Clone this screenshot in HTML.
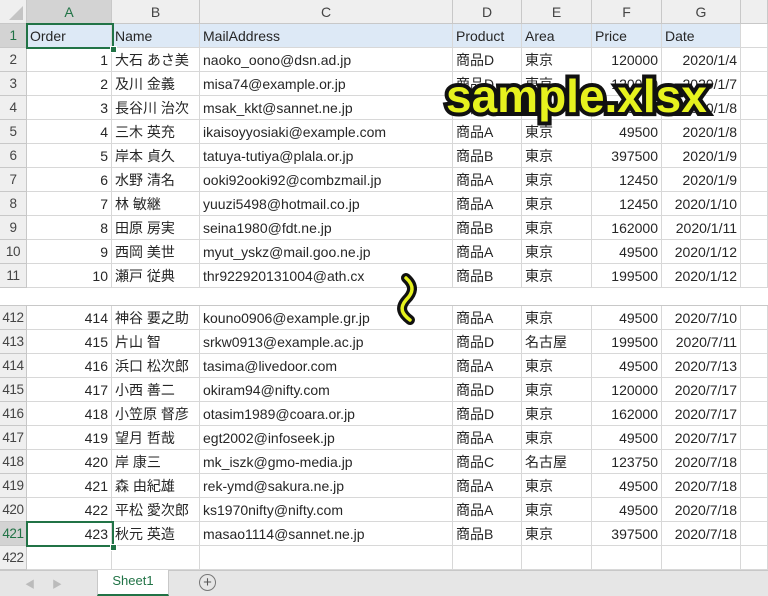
<!DOCTYPE html>
<html><head><meta charset="utf-8"><style>
body{margin:0;width:768px;height:596px;overflow:hidden;background:#fff;font-family:"Liberation Sans","Noto Sans CJK JP",sans-serif;font-size:14px;color:#262626;position:relative}
.c{position:absolute;box-sizing:border-box;height:24px;line-height:24px;padding:0 3px;white-space:nowrap;overflow:hidden;border-right:1px solid #d8d8d8;border-bottom:1px solid #d8d8d8}
.r{text-align:right}
.h{background:#efefef;color:#444;text-align:center;border-color:#c8c8c8}
.rh{background:#efefef;color:#444;text-align:center;padding:0;font-size:13.5px;letter-spacing:-0.4px;border-color:#c8c8c8}
.act{background:#d3d3d3;color:#217346}
.blue{background:#dde9f6}
#label{position:absolute;left:446px;top:69px;font-size:46px;font-weight:bold;color:#e6f21e;-webkit-text-stroke:8px #111;paint-order:stroke fill}
</style></head><body>
<div id="g"></div>
<script>
(function(){
const X=[0,27,112,200,453,522,592,662,741,768];
const topRows=[["1","大石 あさ美","naoko_oono@dsn.ad.jp","商品D","東京","120000","2020/1/4"],
["2","及川 金義","misa74@example.or.jp","商品D","東京","120000","2020/1/7"],
["3","長谷川 治次","msak_kkt@sannet.ne.jp","商品A","東京","49500","2020/1/8"],
["4","三木 英充","ikaisoyyosiaki@example.com","商品A","東京","49500","2020/1/8"],
["5","岸本 貞久","tatuya-tutiya@plala.or.jp","商品B","東京","397500","2020/1/9"],
["6","水野 清名","ooki92ooki92@combzmail.jp","商品A","東京","12450","2020/1/9"],
["7","林 敏継","yuuzi5498@hotmail.co.jp","商品A","東京","12450","2020/1/10"],
["8","田原 房実","seina1980@fdt.ne.jp","商品B","東京","162000","2020/1/11"],
["9","西岡 美世","myut_yskz@mail.goo.ne.jp","商品A","東京","49500","2020/1/12"],
["10","瀬戸 従典","thr922920131004@ath.cx","商品B","東京","199500","2020/1/12"]];
const botRows=[["414","神谷 要之助","kouno0906@example.gr.jp","商品A","東京","49500","2020/7/10"],
["415","片山 智","srkw0913@example.ac.jp","商品D","名古屋","199500","2020/7/11"],
["416","浜口 松次郎","tasima@livedoor.com","商品A","東京","49500","2020/7/13"],
["417","小西 善二","okiram94@nifty.com","商品D","東京","120000","2020/7/17"],
["418","小笠原 督彦","otasim1989@coara.or.jp","商品D","東京","162000","2020/7/17"],
["419","望月 哲哉","egt2002@infoseek.jp","商品A","東京","49500","2020/7/17"],
["420","岸 康三","mk_iszk@gmo-media.jp","商品C","名古屋","123750","2020/7/18"],
["421","森 由紀雄","rek-ymd@sakura.ne.jp","商品A","東京","49500","2020/7/18"],
["422","平松 愛次郎","ks1970nifty@nifty.com","商品A","東京","49500","2020/7/18"],
["423","秋元 英造","masao1114@sannet.ne.jp","商品B","東京","397500","2020/7/18"],
["","","","","","",""]];
let h="";
function cell(i,y,t,cls){h+='<div class="c '+cls+'" style="left:'+X[i]+'px;top:'+y+'px;width:'+(X[i+1]-X[i])+'px">'+t+'</div>';}
const L=["","A","B","C","D","E","F","G",""];
for(let i=0;i<9;i++)cell(i,0,L[i],"h"+(i==1?" act":""));
function row(y,rn,d,hdr,act){cell(0,y,rn,"rh"+(act?" act":""));
 for(let i=0;i<7;i++)cell(i+1,y,d[i],(hdr?"blue":"")+((i==0||i>=5)&&!hdr?" r":""));
 cell(8,y,"","");}
row(24,"1",["Order","Name","MailAddress","Product","Area","Price","Date"],true,true);
topRows.forEach(function(d,k){row(48+24*k,String(k+2),d,false,false);});
botRows.forEach(function(d,k){row(306+24*k,String(412+k),d,false,k==9);});
document.getElementById("g").innerHTML=h;
})();
</script>
<div style="position:absolute;left:0;top:0;width:27px;height:24px;background:#efefef;border-right:1px solid #c8c8c8;border-bottom:1px solid #c8c8c8;box-sizing:border-box"><div style="position:absolute;right:3px;bottom:3px;width:0;height:0;border-left:14px solid transparent;border-bottom:14px solid #c4c4c4"></div></div>
<div style="position:absolute;left:0;top:288px;width:768px;height:18px;background:#fff;border-bottom:1px solid #c8c8c8;box-sizing:border-box"></div>
<div style="position:absolute;left:26px;top:23px;width:88px;height:26px;border:2px solid #217346;box-sizing:border-box"></div>
<div style="position:absolute;left:110px;top:46px;width:5px;height:5px;background:#217346;border:1px solid #fff"></div>
<div style="position:absolute;left:26px;top:521px;width:88px;height:26px;border:2px solid #217346;box-sizing:border-box"></div>
<div style="position:absolute;left:110px;top:544px;width:5px;height:5px;background:#217346;border:1px solid #fff"></div>
<div id="label">sample.xlsx</div>
<svg style="position:absolute;left:0;top:0" width="768" height="596"><path d="M406 278 C415 286,413 293,406 300 C399 308,402 314,410 320" fill="none" stroke="#111" stroke-width="10" stroke-linecap="round"/><path d="M406 278 C415 286,413 293,406 300 C399 308,402 314,410 320" fill="none" stroke="#e6f21e" stroke-width="3.5" stroke-linecap="round"/></svg>
<div style="position:absolute;left:0;top:570px;width:768px;height:26px;background:#e6e6e6;border-top:1px solid #c8c8c8;box-sizing:border-box">
<span style="position:absolute;left:25px;top:5px;color:#bbb;font-size:10px">◀</span>
<span style="position:absolute;left:52px;top:5px;color:#bbb;font-size:10px">▶</span>
<div style="position:absolute;left:97px;top:-1px;width:70px;height:24px;background:#fff;border:1px solid #c8c8c8;border-top:none;border-bottom:2px solid #217346;text-align:center;line-height:22px;color:#217346;font-size:13px">Sheet1</div>
<div style="position:absolute;left:199px;top:3px;width:15px;height:15px;border:1px solid #777;border-radius:50%;text-align:center;line-height:15px;color:#555;font-size:15px">+</div>
</div>
</body></html>
